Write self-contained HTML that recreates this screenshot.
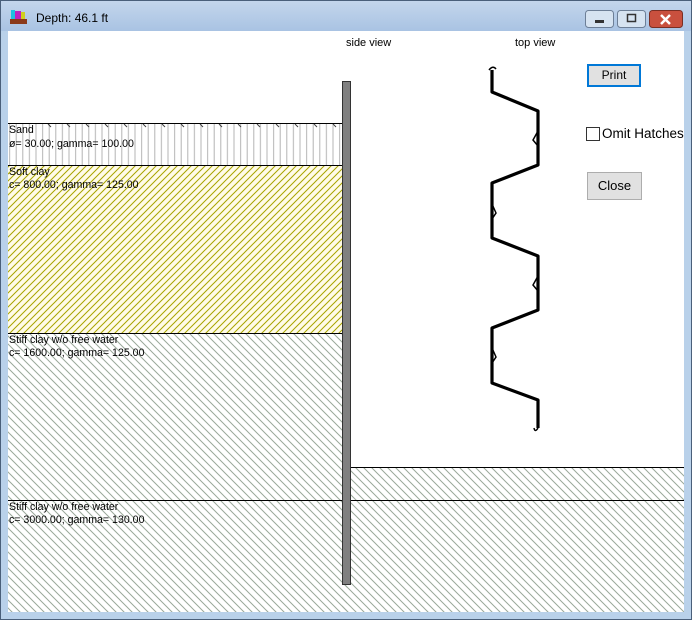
<!DOCTYPE html>
<html><head><style>
html,body{margin:0;padding:0;width:692px;height:620px;overflow:hidden;background:#fff;font-family:"Liberation Sans",sans-serif}
.t{position:absolute;font-size:10.6px;color:#000;white-space:nowrap;line-height:13px}
.btn{position:absolute;background:#e1e1e1;border:1px solid #adadad;font-size:12px;text-align:center;box-sizing:border-box}
</style></head><body>
<svg width="692" height="620" style="position:absolute;left:0;top:0">
<defs>
<linearGradient id="tb" x1="0" y1="0" x2="0" y2="1"><stop offset="0" stop-color="#c4d6ec"/><stop offset="1" stop-color="#a9c3e3"/></linearGradient>
<pattern id="sand" width="6.6" height="200" patternUnits="userSpaceOnUse"><line x1="3" y1="0" x2="3" y2="200" stroke="#b4b4b4" stroke-width="1"/></pattern>
<pattern id="soft" width="7" height="7" patternUnits="userSpaceOnUse"><path d="M-2 9 L9 -2 M-2 2 L2 -2 M5 9 L9 5" stroke="#a8a400" stroke-width="1"/></pattern>
<pattern id="stiff" width="8" height="8" patternUnits="userSpaceOnUse"><path d="M-2 -2 L10 10 M6 -2 L10 2 M-2 6 L2 10" stroke="#9aa89a" stroke-width="1"/></pattern>
</defs>
<rect x="0" y="0" width="692" height="620" fill="#b9d1ea"/>
<rect x="0" y="0" width="692" height="31" fill="url(#tb)"/>
<rect x="0.5" y="0.5" width="691" height="619" fill="none" stroke="#4a5f7a"/>
<rect x="8" y="31" width="676" height="581" fill="#fff"/>
<rect x="8" y="123" width="334" height="42" fill="url(#sand)"/>
<g stroke="#444" stroke-width="1">
<path d="M48 124l3 3M67 124l3 3M86 124l3 3M105 124l3 3M124 124l3 3M143 124l3 3M162 124l3 3M181 124l3 3M200 124l3 3M219 124l3 3M238 124l3 3M257 124l3 3M276 124l3 3M295 124l3 3M314 124l3 3M333 124l3 3"/>
</g>
<rect x="8" y="165" width="334" height="168" fill="#fffbe8"/>
<rect x="8" y="165" width="334" height="168" fill="url(#soft)"/>
<rect x="8" y="333" width="339" height="279" fill="url(#stiff)"/>
<rect x="342" y="467" width="342" height="145" fill="url(#stiff)"/>
<g stroke="#000" stroke-width="1">
<line x1="8" y1="123.5" x2="342" y2="123.5"/>
<line x1="8" y1="165.5" x2="342" y2="165.5"/>
<line x1="8" y1="333.5" x2="342" y2="333.5"/>
<line x1="347" y1="467.5" x2="684" y2="467.5"/>
<line x1="8" y1="500.5" x2="684" y2="500.5"/>
</g>
<rect x="342.5" y="81.5" width="8" height="503" fill="#808080" stroke="#333"/>
<g fill="none" stroke="#000" stroke-width="3.2" stroke-linejoin="round">
<path d="M492 70 L492 92 L538 111 L538 165 L492 183 L492 238 L538 256 L538 310 L492 328 L492 383 L538 400 L538 428"/>
</g>
<g fill="none" stroke="#000" stroke-width="1.5">
<path d="M489 70 q4 -5 7 -1 M538 131 l-5 9 l5 6 M492 204 l4 9 l-4 6 M538 276 l-5 9 l5 6 M492 348 l4 9 l-4 6 M538 428 q-3 5 -4 0"/>
</g>
<rect x="11" y="10" width="4" height="12" fill="#20c0e0"/><rect x="15" y="11" width="6" height="9" fill="#c020c0"/><rect x="10" y="19" width="17" height="5" fill="#8b3a1a"/><rect x="21" y="12" width="4" height="7" fill="#d0d020"/>
<rect x="585.5" y="10.5" width="28" height="17" rx="3" fill="#d6e3f1" stroke="#6d7f97"/>
<rect x="595" y="20" width="9" height="3" fill="#333"/>
<rect x="617.5" y="10.5" width="28" height="17" rx="3" fill="#d6e3f1" stroke="#6d7f97"/>
<rect x="627.5" y="14.5" width="8" height="7" fill="none" stroke="#333" stroke-width="1.5"/>
<rect x="649.5" y="10.5" width="33" height="17" rx="3" fill="#c9503e" stroke="#7a2e23"/>
<path d="M661 15 l9 9 M670 15 l-9 9" stroke="#fff" stroke-width="2.5"/>
</svg>
<div class="t" style="left:36px;top:12px;font-size:12px">Depth: 46.1 ft</div>
<div class="t" style="left:346px;top:37px;font-size:11px">side view</div>
<div class="t" style="left:515px;top:37px;font-size:11px">top view</div>
<div class="t" style="left:9px;top:124px">Sand</div>
<div class="t" style="left:9px;top:138px">ø= 30.00; gamma= 100.00</div>
<div class="t" style="left:9px;top:166px">Soft clay</div>
<div class="t" style="left:9px;top:179px">c= 800.00; gamma= 125.00</div>
<div class="t" style="left:9px;top:334px">Stiff clay w/o free water</div>
<div class="t" style="left:9px;top:347px">c= 1600.00; gamma= 125.00</div>
<div class="t" style="left:9px;top:501px">Stiff clay w/o free water</div>
<div class="t" style="left:9px;top:514px">c= 3000.00; gamma= 130.00</div>
<div class="btn" style="left:587px;top:64px;width:54px;height:23px;border:2px solid #0078d7;line-height:19px">Print</div>
<div style="position:absolute;left:586px;top:127px;width:12px;height:12px;border:1px solid #333;background:#fff"></div>
<div class="t" style="left:602px;top:126px;font-size:13.5px;line-height:16px">Omit Hatches</div>
<div class="btn" style="left:587px;top:172px;width:55px;height:28px;line-height:26px;font-size:13px">Close</div>
</body></html>
